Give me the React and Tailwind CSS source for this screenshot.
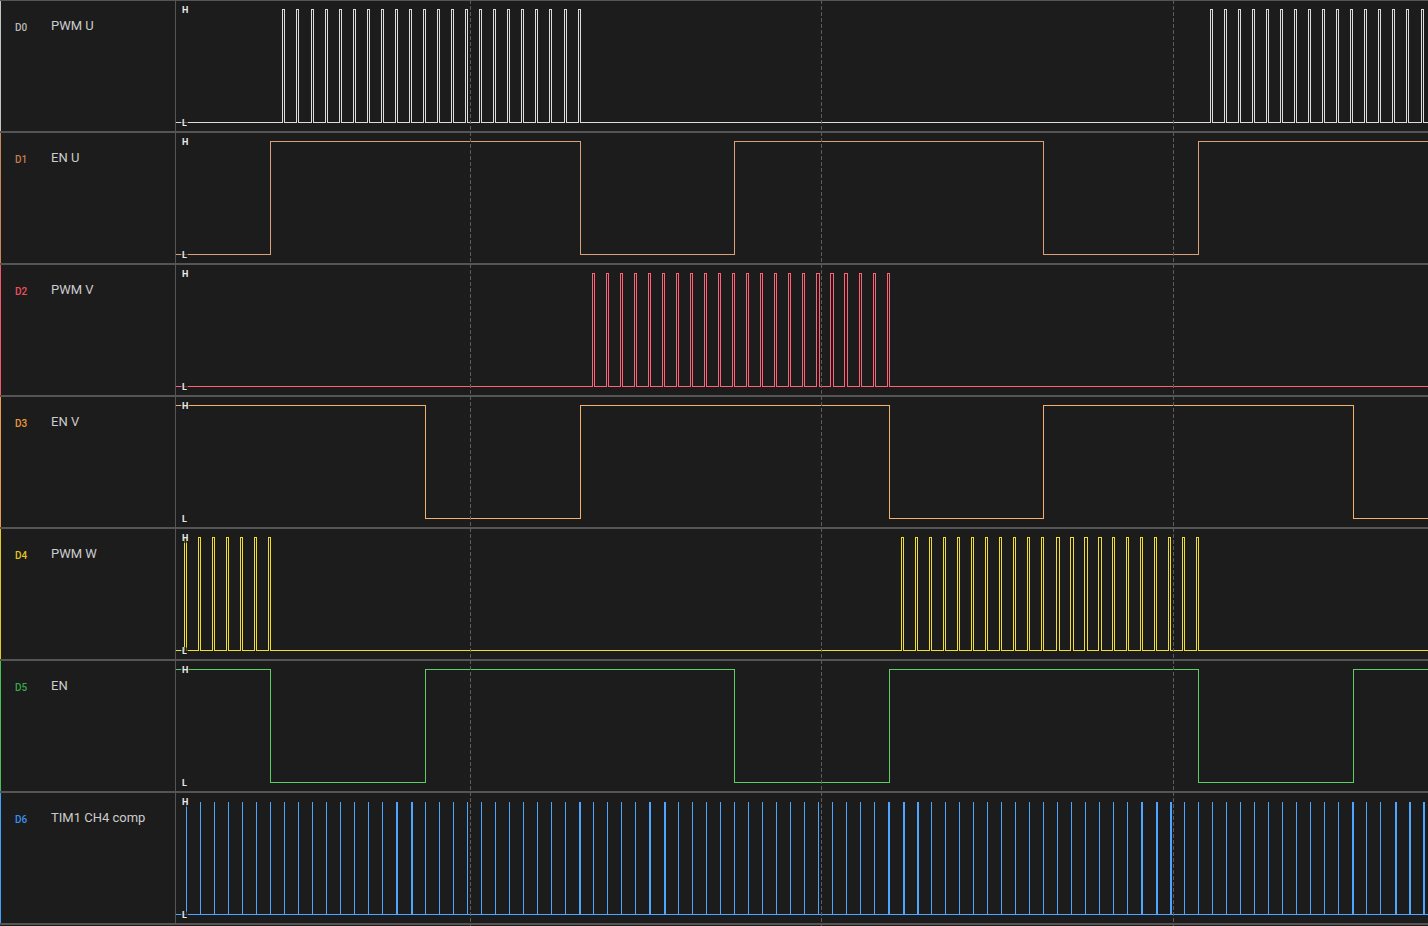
const SPIKE_PERIOD = 14.057;
const PULSE_PERIOD = 14.055;
const WIDTH = 1252;
const HI = 8.5;
const LO = 121.5;

// x here is page x, the plot starts at 176
function px(x) {
    return Math.floor(x - 176) + 0.5;
}

function stepPath(startHigh, edges) {
    let high = startHigh;
    let d = `M0 ${high ? HI : LO}`;
    for (const e of edges) {
        d += ` H${px(e)} V${high ? LO : HI}`;
        high = !high;
    }
    return d + ` H${WIDTH}`;
}

function pulseEdges(groups) {
    const edges = [];
    for (const { start, count, wide = [] } of groups) {
        for (let k = 0; k < count; k++) {
            const x = start + k * PULSE_PERIOD;
            edges.push(x, x + (wide.includes(k) ? 3 : 2));
        }
    }
    return edges;
}

function spikePaths() {
    const thick = [15, 16, 28, 33, 34, 50, 51, 52, 68, 69, 70, 83, 86, 87, 88];
    const lines = [];
    for (let k = 0; k < 89; k++) {
        lines.push({ x: px(186.1 + k * SPIKE_PERIOD), wide: thick.includes(k) });
    }
    return lines;
}

const channels = [
    { tag: "D0", name: "PWM U", edge: "border-l-[#c4c4c4]", text: "text-[#b9b9b9]", color: "#dcdcdc", d: stepPath(false, pulseEdges([{ start: 282.9, count: 22 }, { start: 1210.2, count: 16 }])) },
    { tag: "D1", name: "EN U", edge: "border-l-[#c8875c]", text: "text-[#c4804f]", color: "#dc9f7c", d: stepPath(false, [270.5, 580.5, 734.5, 1043.5, 1198.5]) },
    { tag: "D2", name: "PWM V", edge: "border-l-[#f4566a]", text: "text-[#f0505c]", color: "#ff6175", d: stepPath(false, pulseEdges([{ start: 592, count: 22, wide: [16, 17, 18] }])) },
    { tag: "D3", name: "EN V", edge: "border-l-[#eb9c46]", text: "text-[#e89a3e]", color: "#f4b06c", d: stepPath(true, [425.5, 580.5, 889.5, 1043.5, 1353.5]) },
    { tag: "D4", name: "PWM W", edge: "border-l-[#e6c81e]", text: "text-[#e2c61e]", color: "#f0de2e", d: stepPath(false, pulseEdges([{ start: 184.1, count: 7 }, { start: 901.4, count: 22, wide: [11, 12, 13, 14] }])) },
    { tag: "D5", name: "EN", edge: "border-l-[#46c058]", text: "text-[#3aa84c]", color: "#5ccf64", d: stepPath(true, [270.5, 425.5, 734.5, 889.5, 1198.5, 1353.5]) },
    { tag: "D6", name: "TIM1 CH4 comp", edge: "border-l-[#42a0ff]", text: "text-[#3a90f0]", color: "#4da6ff", spikes: true },
];

function Level({ children }) {
    return (
        <span className="rounded-sm bg-[#1c1c1cb0] px-px text-[9px] leading-[9px] font-bold text-[#e8e8e8]">
            {children}
        </span>
    );
}

function Trace({ channel }) {
    return (
        <svg width={WIDTH} height="130" className="block" shapeRendering="crispEdges" fill="none" stroke={channel.color}>
            {channel.spikes ? (
                <>
                    <path d={`M0 ${LO} H${WIDTH}`} />
                    {spikePaths().map((s) => (
                        <path key={s.x} d={`M${s.x} ${HI} V${LO}`} strokeWidth={s.wide ? 2 : 1} />
                    ))}
                </>
            ) : (
                <path d={channel.d} />
            )}
        </svg>
    );
}

function ChannelRow({ channel }) {
    return (
        <div className="flex h-[132px] border-t-2 border-t-[#555555]">
            <div className={`flex w-[176px] shrink-0 items-start border-l border-r border-r-[#555555] pl-[14px] pt-[17px] ${channel.edge}`}>
                <span className={`mt-1 w-9 text-[10px] leading-3 font-medium ${channel.text}`}>{channel.tag}</span>
                <span className="text-[13px] leading-4 text-[#cccccc]">{channel.name}</span>
            </div>
            <div className="relative flex-1 overflow-hidden">
                <Trace channel={channel} />
                <div className="absolute inset-y-0 left-[5px] flex flex-col items-start justify-between pt-[5px] pb-[3px]">
                    <Level>H</Level>
                    <Level>L</Level>
                </div>
            </div>
        </div>
    );
}

function Cursor({ className }) {
    return (
        <div className={`absolute top-0 bottom-0 w-px bg-[repeating-linear-gradient(to_bottom,#5c5c5c_0,#5c5c5c_4px,transparent_4px,transparent_6px)] ${className}`} />
    );
}

export default function App() {
    return (
        <div className="relative h-[926px] w-[1428px] overflow-hidden bg-[#1c1c1c] font-['Roboto',sans-serif]">
            <div className="-mt-px border-b-2 border-b-[#555555]">
                {channels.map((c) => (
                    <ChannelRow key={c.tag} channel={c} />
                ))}
            </div>
            <Cursor className="left-[470px]" />
            <Cursor className="left-[821px]" />
            <Cursor className="left-[1173px]" />
        </div>
    );
}
